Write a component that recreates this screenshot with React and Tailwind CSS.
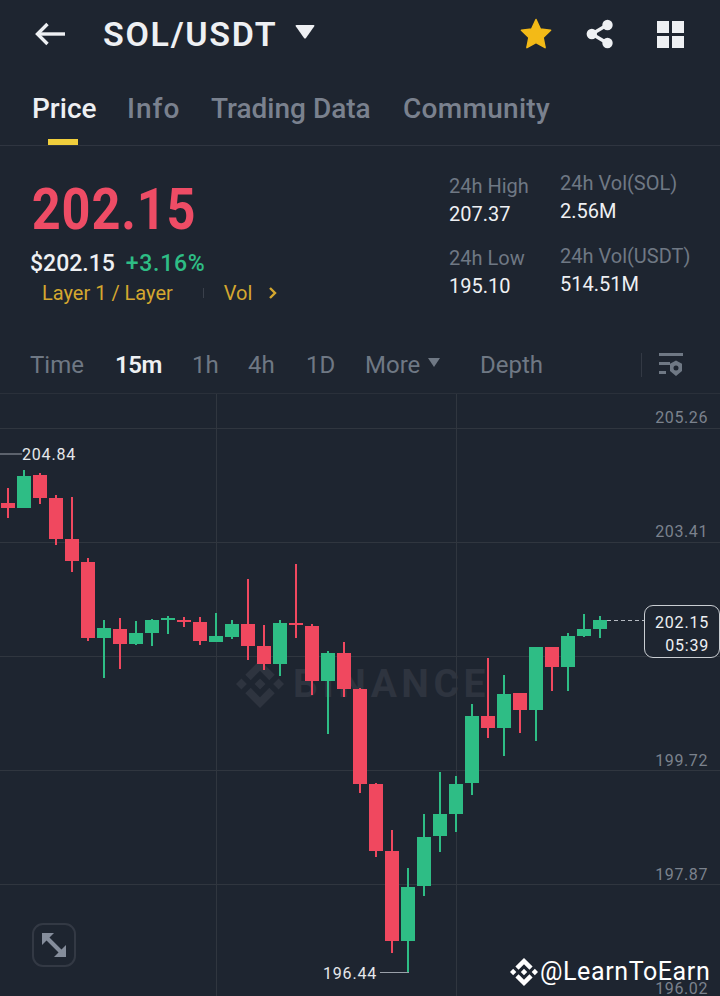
import React from 'react';

const RED = '#F0485F';
const GREEN = '#2EBD85';

// x, wick top, wick bottom, body top, body bottom, colour ("r" or "g")
const candles = [
    [8, 488, 518, 503, 508, 'r'],
    [24, 470, 508, 476, 508, 'g'],
    [40, 473, 504, 475, 498, 'r'],
    [56, 495, 545, 498, 539, 'r'],
    [72, 497, 572, 539, 561, 'r'],
    [88, 558, 641, 562, 638, 'r'],
    [104, 620, 678, 628, 638, 'g'],
    [120, 618, 669, 629, 644, 'r'],
    [136, 621, 645, 633, 644, 'g'],
    [152, 619, 646, 620, 633, 'g'],
    [168, 616, 634, 618, 620, 'g'],
    [184, 617, 627, 620, 622, 'r'],
    [200, 617, 645, 622, 641, 'r'],
    [216, 613, 642, 636, 642, 'g'],
    [232, 620, 639, 624, 637, 'g'],
    [248, 579, 660, 624, 646, 'r'],
    [264, 625, 670, 646, 664, 'r'],
    [280, 620, 676, 623, 664, 'g'],
    [296, 564, 638, 623, 625, 'r'],
    [312, 624, 695, 626, 681, 'r'],
    [328, 651, 734, 653, 681, 'g'],
    [344, 642, 697, 653, 689, 'r'],
    [360, 688, 793, 689, 784, 'r'],
    [376, 783, 857, 784, 851, 'r'],
    [392, 830, 953, 851, 941, 'r'],
    [408, 868, 973, 887, 941, 'g'],
    [424, 814, 896, 837, 886, 'g'],
    [440, 772, 852, 814, 836, 'g'],
    [456, 776, 832, 784, 814, 'g'],
    [472, 704, 795, 716, 783, 'g'],
    [488, 658, 738, 716, 728, 'r'],
    [504, 675, 756, 694, 728, 'g'],
    [520, 693, 733, 693, 710, 'r'],
    [536, 647, 741, 647, 710, 'g'],
    [552, 647, 691, 647, 667, 'r'],
    [568, 633, 691, 636, 667, 'g'],
    [584, 614, 637, 629, 636, 'g'],
    [600, 616, 638, 620, 629, 'g'],
];

const BinanceLogo = ({ className }) => (
    <svg viewBox="0 0 126.61 126.61" fill="currentColor" className={className}>
        <path d="M38.73 53.2l24.59-24.58 24.6 24.6 14.3-14.31L63.32 0 24.43 38.9z" />
        <path d="M0 63.31l14.3-14.31 14.31 14.31-14.31 14.3z" />
        <path d="M38.73 73.41l24.59 24.59 24.6-24.6 14.31 14.29-.01.01-38.9 38.91-38.9-38.88-.02-.02z" />
        <path d="M98 63.31l14.3-14.31 14.31 14.3-14.31 14.31z" />
        <path d="M77.83 63.3L63.32 48.78 52.59 59.51l-1.24 1.23-2.54 2.54 14.51 14.52 14.51-14.5z" />
    </svg>
);

const Header = () => (
    <div className="flex items-center h-[68px] pl-[35px] pr-[36px] text-[#eef0f3]">
        <svg viewBox="0 0 30 24" className="w-[30px] h-[24px]" fill="none" stroke="currentColor" strokeWidth="3.4">
            <path d="M30 12H3" />
            <path d="M12.5 2L2.5 12l10 10" />
        </svg>
        <span className="ml-[38px] w-[176px] text-[34px] font-semibold tracking-[1.7px] leading-none whitespace-nowrap">SOL/USDT</span>
        <svg viewBox="0 0 20 14" className="ml-[16px] mb-[4px] w-[20px] h-[14px]" fill="currentColor">
            <path d="M1.5 0h17q1.5 0 .6 1.4L11 13q-1 1.2-2 0L.9 1.4Q0 0 1.5 0z" />
        </svg>
        <svg viewBox="0 0 32 32" className="ml-auto w-[32px] h-[32px]" fill="#F3BA17">
            <path d="M16 1.5l4.4 9.6 10.2 1.2-7.5 7.1 2 10.3L16 24.6l-9.1 5.1 2-10.3-7.5-7.1 10.2-1.2z" stroke="#F3BA17" strokeWidth="1.5" strokeLinejoin="round" />
        </svg>
        <svg viewBox="0 0 30 30" className="ml-[33px] w-[30px] h-[30px]" fill="currentColor" stroke="currentColor">
            <path d="M22 6L7 15l15 9" fill="none" strokeWidth="3.4" />
            <circle cx="22.5" cy="6" r="5.2" strokeWidth="0" />
            <circle cx="6.8" cy="15" r="5.2" strokeWidth="0" />
            <circle cx="22.5" cy="24" r="5.2" strokeWidth="0" />
        </svg>
        <div className="ml-[42px] grid grid-cols-2 gap-[3px] w-[27px] h-[27px]">
            <span className="bg-[#eef0f3]" />
            <span className="bg-[#eef0f3]" />
            <span className="bg-[#eef0f3]" />
            <span className="bg-[#eef0f3]" />
        </div>
    </div>
);

const Tabs = () => (
    <div className="relative flex h-[78px] pl-[32px] pt-[20px] border-b border-[#2f3540] text-[28px] leading-[42px] text-[#7a818e] font-medium whitespace-nowrap">
        <span className="relative w-[64px] text-[#eef0f3]">
            Price
            <span className="absolute left-[16px] top-[51px] w-[30px] h-[6px] bg-[#F0CE3C]" />
        </span>
        <span className="ml-[31px] w-[53px] tracking-[1px]">Info</span>
        <span className="ml-[31px] w-[160px]">Trading Data</span>
        <span className="ml-[32px] tracking-[0.3px]">Community</span>
    </div>
);

const Stat = ({ label, value, className = '' }) => (
    <div className={className}>
        <div className="text-[20px] leading-[28px] text-[#6f7884]">{label}</div>
        <div className="text-[20px] leading-[28px] text-[#eef0f3]">{value}</div>
    </div>
);

const Summary = () => (
    <div className="flex h-[202px] pl-[30px]">
        <div className="w-[419px]">
            <div className="pl-[2px] pt-[29px] text-[58px] leading-[68px] font-bold tracking-[1px] text-[#EE4C65] origin-left scale-x-[0.87]">202.15</div>
            <div className="flex gap-[11px] mt-[5px] text-[23px] leading-[32px] font-medium">
                <span className="text-[#eef0f3]">$202.15</span>
                <span className="tracking-[0.7px] text-[#2EBD85]">+3.16%</span>
            </div>
            <div className="flex items-center ml-[12px] -mt-[1px] text-[20px] leading-[28px] text-[#D4A72F]">
                <span>Layer 1 / Layer</span>
                <span className="ml-[30px] w-px h-[10px] bg-[#3a404b]" />
                <span className="ml-[20px]">Vol</span>
                <svg viewBox="0 0 10 12" className="ml-[16px] w-[10px] h-[12px]" fill="none" stroke="currentColor" strokeWidth="2.4">
                    <path d="M2 1l5 5-5 5" />
                </svg>
            </div>
        </div>
        <div className="w-[111px] pt-[26px]">
            <Stat label="24h High" value="207.37" />
            <Stat label="24h Low" value="195.10" className="mt-[16px]" />
        </div>
        <div className="pt-[23px]">
            <Stat label="24h Vol(SOL)" value="2.56M" />
            <Stat label="24h Vol(USDT)" value="514.51M" className="mt-[17px]" />
        </div>
    </div>
);

const Toolbar = () => (
    <div className="flex items-center h-[46px] pb-[12px] border-b border-[#2a303a] pl-[30px] text-[24px] text-[#6f7884]">
        <span className="w-[85px]">Time</span>
        <span className="w-[77px] font-semibold tracking-[-0.5px] text-[#eef0f3]">15m</span>
        <span className="w-[56px]">1h</span>
        <span className="w-[58px]">4h</span>
        <span className="w-[59px]">1D</span>
        <span className="w-[63px]">More</span>
        <svg viewBox="0 0 12 9" className="mb-[5px] w-[12px] h-[9px]" fill="#6f7884">
            <path d="M0 0h12L6 9z" />
        </svg>
        <span className="ml-[40px]">Depth</span>
        <span className="ml-[98px] w-px h-[24px] bg-[#333944]" />
        <svg viewBox="0 0 24 23" className="ml-[17px] w-[24px] h-[23px]" fill="#6f7884">
            <path d="M0 0h24v3H0zM0 9h11v3H0zM0 18h7v3H0z" />
            <path fillRule="evenodd" d="M17 7.5l6 3.2v7.2L17 23l-6-5.1v-7.2zM17 12.5a2.5 2.5 0 100 5 2.5 2.5 0 000-5z" />
        </svg>
    </div>
);

const Chart = () => (
    <div className="relative h-[602px] overflow-hidden">
        <div className="absolute left-[236px] top-[266px] flex items-center gap-[9px] text-[#2e343f]">
            <BinanceLogo className="w-[48px] h-[48px]" />
            <span className="text-[39px] leading-[48px] font-bold tracking-[4.5px]">BINANCE</span>
        </div>

        <svg viewBox="0 394 720 602" className="absolute inset-0 w-[720px] h-[602px]">
            {[428, 542, 656, 770, 884].map((y) => (
                <line key={y} x1="0" x2="720" y1={y + 0.5} y2={y + 0.5} stroke="#30363f" />
            ))}
            {[216, 456].map((x) => (
                <line key={x} x1={x + 0.5} x2={x + 0.5} y1="394" y2="996" stroke="#30363f" />
            ))}
            {candles.map(([x, wt, wb, bt, bb, c]) => (
                <g key={x} fill={c === 'r' ? RED : GREEN}>
                    <rect x={x - 1} y={wt} width="2" height={wb - wt} />
                    <rect x={x - 7} y={bt} width="14" height={bb - bt} />
                </g>
            ))}
            <line x1="0" x2="22" y1="454" y2="454" stroke="#9aa0a9" />
            <line x1="380" x2="409" y1="972.5" y2="972.5" stroke="#9aa0a9" />
            <line x1="607" x2="644" y1="620.5" y2="620.5" stroke="#b5bac1" strokeDasharray="4 3" />
        </svg>

        <span className="absolute right-[12px] top-[14px] text-[16px] leading-[20px] tracking-[0.6px] text-[#7b828d]">205.26</span>
        <span className="absolute right-[12px] top-[128px] text-[16px] leading-[20px] tracking-[0.6px] text-[#7b828d]">203.41</span>
        <span className="absolute right-[12px] top-[357px] text-[16px] leading-[20px] tracking-[0.6px] text-[#7b828d]">199.72</span>
        <span className="absolute right-[12px] top-[471px] text-[16px] leading-[20px] tracking-[0.6px] text-[#7b828d]">197.87</span>
        <span className="absolute right-[12px] top-[585px] text-[16px] leading-[20px] tracking-[0.6px] text-[#7b828d]">196.02</span>

        <span className="absolute left-[22px] top-[51px] text-[16px] leading-[20px] tracking-[0.8px] text-[#e6e8eb]">204.84</span>
        <span className="absolute left-[323px] top-[570px] text-[16px] leading-[20px] tracking-[0.8px] text-[#e6e8eb]">196.44</span>

        <div className="absolute left-[644px] top-[211px] w-[76px] h-[53px] rounded-[9px] border border-[#c9cdd2] bg-[#1E2530] pt-[5px] pr-[10px] text-right text-[16px] leading-[23px] tracking-[0.8px] text-[#eef0f3]">
            <div>202.15</div>
            <div>05:39</div>
        </div>

        <div className="absolute left-[32px] top-[529px] flex items-center justify-center w-[44px] h-[44px] rounded-[11px] border-2 border-[#333944]">
            <svg viewBox="0 0 26 26" className="w-[26px] h-[26px]" fill="#858d9b" stroke="#858d9b">
                <path d="M1 1h12L1 13z" strokeWidth="0" />
                <path d="M25 25H13l12-12z" strokeWidth="0" />
                <path d="M5 5l16 16" strokeWidth="4" fill="none" />
            </svg>
        </div>

        <div className="absolute left-[510px] top-[563px] flex items-center gap-[2px] text-white">
            <BinanceLogo className="w-[28px] h-[28px]" />
            <span className="text-[25px] leading-[30px] tracking-[0.6px]">@LearnToEarn</span>
        </div>
    </div>
);

const App = () => {
    return (
        <div className="w-[720px] h-[996px] overflow-hidden bg-[#1E2530] font-['Roboto',sans-serif]">
            <Header />
            <Tabs />
            <Summary />
            <Toolbar />
            <Chart />
        </div>
    );
};

export default App;
